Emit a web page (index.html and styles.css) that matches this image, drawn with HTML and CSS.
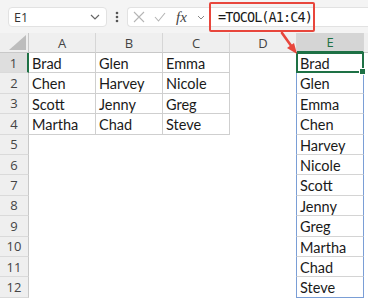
FILE: index.html
```html
<!DOCTYPE html>
<html>
<head>
<meta charset="utf-8">
<link rel="stylesheet" href="styles.css">
</head>
<body>
<div class="app">
  <div class="toolbar">
    <div class="namebox">
      <span class="name">E1</span>
      <svg class="chev" width="10" height="6" viewBox="0 0 10 6"><path d="M1 1 L5 5 L9 1" fill="none" stroke="#666" stroke-width="1.2"/></svg>
    </div>
    <div class="dots">
      <svg width="4" height="12" viewBox="0 0 4 12"><circle cx="2" cy="2" r="1.3" fill="#555"/><circle cx="2" cy="6" r="1.3" fill="#555"/><circle cx="2" cy="10" r="1.3" fill="#555"/></svg>
    </div>
    <div class="fbar">
      <div class="fbtns">
        <svg class="ico-x" width="12" height="12" viewBox="0 0 12 12"><path d="M1 1 L11 11 M11 1 L1 11" stroke="#b5b5b5" stroke-width="1.1" fill="none"/></svg>
        <svg class="ico-ok" width="12" height="10" viewBox="0 0 12 10"><path d="M1 5 L4.5 9 L11 1" stroke="#b5b5b5" stroke-width="1.1" fill="none"/></svg>
        <span class="fx">fx</span>
        <svg class="chev2" width="8" height="5" viewBox="0 0 8 5"><path d="M1 1 L4 4 L7 1" fill="none" stroke="#888" stroke-width="1"/></svg>
      </div>
      <div class="formula">=TOCOL(A1:C4)</div>
    </div>
  </div>
  <div class="sheet">
    <div class="corner"><svg width="17" height="15" viewBox="0 0 17 15"><path d="M17 0 L17 15 L0 15 Z" fill="#bdbdbd"/></svg></div>
    <div class="ch">A</div><div class="ch">B</div><div class="ch">C</div><div class="ch">D</div><div class="ch sel">E</div><div class="ch last"></div>

    <div class="rh sel">1</div><div class="c b">Brad</div><div class="c b">Glen</div><div class="c b">Emma</div><div class="c"></div><div class="c e active">Brad</div><div class="c"></div>
    <div class="rh">2</div><div class="c b">Chen</div><div class="c b">Harvey</div><div class="c b">Nicole</div><div class="c"></div><div class="c e">Glen</div><div class="c"></div>
    <div class="rh">3</div><div class="c b">Scott</div><div class="c b">Jenny</div><div class="c b">Greg</div><div class="c"></div><div class="c e">Emma</div><div class="c"></div>
    <div class="rh">4</div><div class="c b">Martha</div><div class="c b">Chad</div><div class="c b">Steve</div><div class="c"></div><div class="c e">Chen</div><div class="c"></div>
    <div class="rh">5</div><div class="c"></div><div class="c"></div><div class="c"></div><div class="c"></div><div class="c e">Harvey</div><div class="c"></div>
    <div class="rh">6</div><div class="c"></div><div class="c"></div><div class="c"></div><div class="c"></div><div class="c e">Nicole</div><div class="c"></div>
    <div class="rh">7</div><div class="c"></div><div class="c"></div><div class="c"></div><div class="c"></div><div class="c e">Scott</div><div class="c"></div>
    <div class="rh">8</div><div class="c"></div><div class="c"></div><div class="c"></div><div class="c"></div><div class="c e">Jenny</div><div class="c"></div>
    <div class="rh">9</div><div class="c"></div><div class="c"></div><div class="c"></div><div class="c"></div><div class="c e">Greg</div><div class="c"></div>
    <div class="rh">10</div><div class="c"></div><div class="c"></div><div class="c"></div><div class="c"></div><div class="c e">Martha</div><div class="c"></div>
    <div class="rh">11</div><div class="c"></div><div class="c"></div><div class="c"></div><div class="c"></div><div class="c e">Chad</div><div class="c"></div>
    <div class="rh">12</div><div class="c"></div><div class="c"></div><div class="c"></div><div class="c"></div><div class="c e end">Steve</div><div class="c"></div>
  </div>
  <svg class="arrow" width="30" height="30" viewBox="0 0 30 30">
    <path d="M3 1 L13 15" stroke="#e8463c" stroke-width="2.6" fill="none" stroke-linecap="round"/>
    <path d="M18 22 L8 16 L15 11 Z" fill="#e8463c"/>
  </svg>
</div>
</body>
</html>
```

FILE: styles.css
```css
* { box-sizing: border-box; }
html, body { margin: 0; padding: 0; }
body { width: 368px; height: 300px; overflow: hidden; background: #fff; font-family: Lato, "Open Sans", sans-serif; }
.app { position: relative; width: 368px; height: 300px; }

.toolbar {
  height: 33px;
  background: #f4f4f4;
  display: flex;
  align-items: flex-start;
  padding: 7px 0 0 8px;
}
.namebox {
  width: 99px;
  height: 20px;
  background: #fff;
  border: 1px solid #e2e2e2;
  border-radius: 4px;
  display: flex;
  align-items: center;
  justify-content: space-between;
  padding: 0 6px 0 5px;
}
.name { font-family: "Open Sans", sans-serif; font-size: 12.5px; color: #333; }
.dots { width: 20px; height: 20px; display: flex; align-items: center; justify-content: center; }
.fbar {
  flex: 1;
  height: 20px;
  background: #fff;
  border: 1px solid #e2e2e2;
  border-right: none;
  border-radius: 4px 0 0 4px;
  display: flex;
  align-items: center;
}
.fbtns { width: 81px; height: 18px; display: flex; align-items: center; padding-left: 5px; }
.ico-x { margin-right: 9px; }
.ico-ok { margin-right: 10px; }
.fx { font-family: "Liberation Serif", serif; font-style: italic; font-size: 15px; color: #444; margin-right: 10px; line-height: 18px; }
.formula {
  width: 106px;
  height: 30px;
  flex: none;
  border: 2px solid #e8463c;
  border-radius: 2px;
  display: flex;
  align-items: center;
  padding-left: 7px;
  font-family: "DejaVu Sans Mono", monospace;
  font-size: 13.5px;
  letter-spacing: -0.9px;
  color: #1a1a1a;
}

.sheet {
  display: grid;
  grid-template-columns: 29px 67px 67px 67px 67px 67px 4px;
  grid-template-rows: 20px repeat(12, 20.4px);
}
.corner {
  background: #efefef;
  border-right: 1px solid #c8c8c8;
  border-bottom: 1px solid #c8c8c8;
  display: flex;
  align-items: flex-end;
  justify-content: flex-end;
  padding: 0 2px 2px 0;
}
.ch {
  background: #efefef;
  border-right: 1px solid #d6d6d6;
  border-bottom: 1px solid #c8c8c8;
  display: flex;
  align-items: center;
  justify-content: center;
  font-family: "Open Sans", sans-serif;
  font-size: 13px;
  color: #444;
}
.ch.last { border-right: none; }
.ch.sel { background: #d5d5d5; color: #1e7145; border-bottom: 2px solid #1e7145; }
.rh {
  background: #efefef;
  border-right: 1px solid #c8c8c8;
  border-bottom: 1px solid #dadada;
  display: flex;
  align-items: center;
  justify-content: center;
  font-family: "Open Sans", sans-serif;
  font-size: 13px;
  color: #444;
}
.rh.sel { background: #dedede; border-right: 2px solid #1e7145; }
.c {
  font-size: 14.5px;
  color: #1a1a1a;
  padding: 1px 0 0 3px;
  line-height: 19px;
  white-space: nowrap;
  overflow: visible;
}
.c.b { border-right: 1px solid #cfcfcf; border-bottom: 1px solid #cfcfcf; }
.c.e {
  border-left: 1px solid #7a9ed6;
  border-right: 1px solid #7a9ed6;
  border-bottom: 1px solid #d4d4d4;
  margin-left: -1px;
  padding-left: 3px;
}
.c.e.end { border-bottom: 1px solid #7a9ed6; }
.c.active { position: relative; }
.c.active::before {
  content: "";
  position: absolute;
  left: -1px; top: -1px; right: -1px; bottom: -1px;
  border: 2px solid #1e7145;
}
.c.active::after {
  content: "";
  position: absolute;
  right: -3px; bottom: -3px;
  width: 5px; height: 5px;
  background: #1e7145;
  border: 1px solid #fff;
}
.arrow { position: absolute; left: 279px; top: 32px; }
```
